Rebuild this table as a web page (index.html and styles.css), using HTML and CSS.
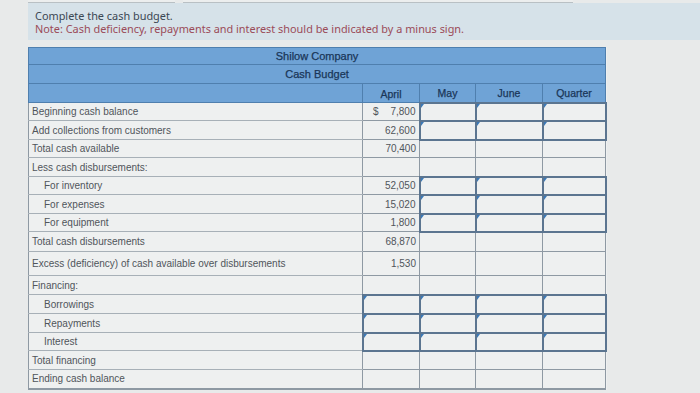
FILE: index.html
```html
<!DOCTYPE html>
<html>
<head>
<meta charset="utf-8">
<link rel="stylesheet" href="styles.css">
</head>
<body>
<div class="page">
  <div class="topstrip">
    <div class="stub stub-a"></div>
    <div class="stub stub-b"></div>
  </div>
  <div class="instructions">
    <div class="line-main">Complete the cash budget.</div>
    <div class="line-note">Note: Cash deficiency, repayments and interest should be indicated by a minus sign.</div>
  </div>
  <table class="budget">
    <colgroup>
      <col class="c-label"><col class="c-apr"><col class="c-may"><col class="c-jun"><col class="c-qtr">
    </colgroup>
    <thead>
      <tr class="h1"><th colspan="5">Shilow Company</th></tr>
      <tr class="h2"><th colspan="5">Cash Budget</th></tr>
      <tr class="h3"><th></th><th>April</th><th>May</th><th>June</th><th>Quarter</th></tr>
    </thead>
    <tbody>
      <tr class="r18"><td class="lbl">Beginning cash balance</td><td class="num"><span class="dollar">$</span>7,800</td><td class="in"></td><td class="in"></td><td class="in"></td></tr>
      <tr class="r19"><td class="lbl">Add collections from customers</td><td class="num">62,600</td><td class="in"></td><td class="in"></td><td class="in"></td></tr>
      <tr class="r18"><td class="lbl">Total cash available</td><td class="num">70,400</td><td></td><td></td><td></td></tr>
      <tr class="r19"><td class="lbl">Less cash disbursements:</td><td></td><td></td><td></td><td></td></tr>
      <tr class="r18"><td class="lbl ind">For inventory</td><td class="num">52,050</td><td class="in"></td><td class="in"></td><td class="in"></td></tr>
      <tr class="r19"><td class="lbl ind">For expenses</td><td class="num">15,020</td><td class="in"></td><td class="in"></td><td class="in"></td></tr>
      <tr class="r18"><td class="lbl ind">For equipment</td><td class="num">1,800</td><td class="in"></td><td class="in"></td><td class="in"></td></tr>
      <tr class="r20"><td class="lbl">Total cash disbursements</td><td class="num">68,870</td><td></td><td></td><td></td></tr>
      <tr class="r24"><td class="lbl">Excess (deficiency) of cash available over disbursements</td><td class="num">1,530</td><td></td><td></td><td></td></tr>
      <tr class="r19"><td class="lbl">Financing:</td><td></td><td></td><td></td><td></td></tr>
      <tr class="r19"><td class="lbl ind">Borrowings</td><td class="in"></td><td class="in"></td><td class="in"></td><td class="in"></td></tr>
      <tr class="r19"><td class="lbl ind">Repayments</td><td class="in"></td><td class="in"></td><td class="in"></td><td class="in"></td></tr>
      <tr class="r18"><td class="lbl ind">Interest</td><td class="in"></td><td class="in"></td><td class="in"></td><td class="in"></td></tr>
      <tr class="r19"><td class="lbl">Total financing</td><td></td><td></td><td></td><td></td></tr>
      <tr class="r19"><td class="lbl">Ending cash balance</td><td></td><td></td><td></td><td></td></tr>
    </tbody>
  </table>
</div>
</body>
</html>
```

FILE: styles.css
```css
html, body {
  margin: 0;
  padding: 0;
  background: #e8eaea;
}
.page {
  width: 700px;
  height: 393px;
  overflow: hidden;
  padding-left: 28px;
  box-sizing: border-box;
}
.topstrip {
  height: 3px;
  display: flex;
  gap: 8px;
}
.stub {
  height: 2px;
  border-bottom: 1px solid #b9c0c4;
  background: #eceeee;
}
.stub-a { width: 147px; }
.stub-b { width: 390px; }
.instructions {
  height: 37px;
  background: #d6e2e9;
  padding: 6px 0 0 7px;
  box-sizing: border-box;
  font-family: "Noto Sans", "DejaVu Sans", sans-serif;
  font-size: 10.9px;
  line-height: 13px;
}
.line-main { color: #3b4753; }
.line-note { color: #9b4b58; }
.budget {
  margin-top: 7px;
  border-collapse: collapse;
  width: 577px;
  table-layout: fixed;
  font-family: "Liberation Sans", Arial, sans-serif;
  background: #eef0f0;
}
.c-label { width: 334px; }
.c-apr { width: 57px; }
.c-may { width: 56px; }
.c-jun { width: 67px; }
.c-qtr { width: 63px; }
.budget th {
  background: #6fa3d6;
  color: #1a3658;
  font-weight: normal;
  font-size: 11px;
  padding: 0;
  border: 1px solid #4f7fae;
  text-align: center;
  -webkit-text-stroke: 0.25px #1a3658;
}
.h1 { height: 17px; }
.h2 { height: 19px; }
.h3 { height: 19px; }
.h3 th { font-size: 10.5px; padding-top: 1px; }
.budget td {
  border: 1px solid #8e99a3;
  padding: 0;
  font-size: 10px;
  color: #50555b;
  position: relative;
}
.budget td.lbl {
  padding-left: 3px;
  border-color: #a7b0b7;
  border-right-color: #8e99a3;
  border-left-color: #8e99a3;
  white-space: nowrap;
}
.budget td.ind { padding-left: 15px; }
.budget td.num {
  text-align: right;
  padding-right: 3px;
}
.dollar {
  float: left;
  padding-left: 10px;
}
.budget td.in {
  border: 2px solid #5b7590;
}
.budget td.in::before {
  content: "";
  position: absolute;
  left: 0;
  top: 0;
  width: 0;
  height: 0;
  border-top: 4px solid #3b78b6;
  border-right: 3px solid transparent;
}
.r18 { height: 18px; }
.r19 { height: 19px; }
.r20 { height: 20px; }
.r24 { height: 24px; }
.budget tbody tr:last-child td { border-bottom: 2px solid #8e99a3; }
```
